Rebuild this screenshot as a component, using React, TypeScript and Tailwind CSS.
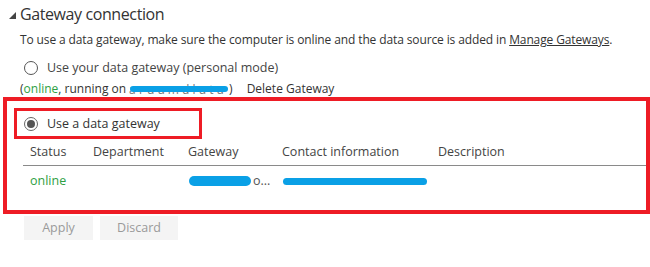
import React from "react";

const font = { fontFamily: '"Open Sans", "Noto Sans", sans-serif' };

function Blur({ w, h = 7, className = "" }: { w: number; h?: number; className?: string }) {
  return (
    <svg width={w} height={h + 2} viewBox={`0 0 ${w} ${h + 2}`} className={className}>
      <path d={`M${h / 2 + 1} ${h / 2 + 1} L${w - h / 2 - 1} ${h / 2 + 1}`} stroke="#0aa0e6" strokeWidth={h} strokeLinecap="round" />
    </svg>
  );
}

export default function App() {
  return (
    <div className="w-[650px] h-[267px] bg-white overflow-hidden text-[#333]" style={font}>
      {/* Title */}
      <div className="flex items-center h-[22px] mt-[3px] pl-[9px]">
        <svg width="7" height="7" viewBox="0 0 7 7" className="mr-[4px] mt-[2px]">
          <polygon points="7,0 7,7 0,7" fill="#444" />
        </svg>
        <span className="text-[16px] leading-none tracking-[-0.4px] text-[#333]">Gateway connection</span>
      </div>
      {/* Description */}
      <div className="ml-[20px] mt-[7px] h-[16px] text-[12px] leading-[16px] tracking-[-0.12px] text-[#333] whitespace-nowrap">
        To use a data gateway, make sure the computer is online and the data source is added in{" "}
        <span className="underline">Manage Gateways</span>.
      </div>
      {/* Radio 1 */}
      <div className="flex items-center ml-[24px] mt-[12px] h-[16px]">
        <span className="w-[14px] h-[14px] rounded-full border-[1.5px] border-[#555] box-border" />
        <span className="ml-[9px] text-[12.5px] tracking-[0px] leading-[16px] text-[#444] whitespace-nowrap">
          Use your data gateway (personal mode)
        </span>
      </div>
      {/* status line */}
      <div className="flex items-center ml-[20px] mt-[6px] h-[14px] text-[12px] tracking-[0px] leading-[16px] text-[#333] whitespace-nowrap">
        <span>(</span>
        <span className="text-[#2ea043]">online</span>
        <span>, running on</span>
        <span className="relative w-[100px] h-[12px] ml-[3px]">
          <span className="absolute left-0 top-[-1px] text-[#777]">a r u u m d l u t u</span>
          <Blur w={100} h={6} className="absolute left-0 top-[2px]" />
        </span>
        <span>)</span>
        <span className="ml-[14px]">Delete Gateway</span>
      </div>
      {/* Red outlined section */}
      <div className="ml-[3px] mt-[1px] w-[647px] h-[117px] border-4 border-[#ee1c25] box-border">
        <div className="ml-[7px] mt-[7px] w-[188px] h-[31px] border-[3px] border-[#ee1c25] box-border flex items-center pl-[7px]">
          <span className="w-[14px] h-[14px] rounded-full border-[1.5px] border-[#666] box-border flex items-center justify-center">
            <span className="w-[8px] h-[8px] rounded-full bg-[#555]" />
          </span>
          <span className="ml-[9px] text-[12.5px] tracking-[0px] leading-[16px] text-[#333] whitespace-nowrap">Use a data gateway</span>
        </div>
        {/* Table */}
        <div className="ml-[16px] mt-[5px] w-[623px]">
          <div className="flex h-[22px] items-center pb-[4px] border-b-[1.5px] border-[#8a8a8a] text-[12.5px] tracking-[0px] text-[#444] pl-[7px] whitespace-nowrap">
            <span className="w-[63px]">Status</span>
            <span className="w-[95px]">Department</span>
            <span className="w-[94px]">Gateway</span>
            <span className="w-[156px]">Contact information</span>
            <span>Description</span>
          </div>
          <div className="flex h-[30px] items-center text-[12.5px] tracking-[0px] text-[#444] pl-[7px] whitespace-nowrap">
            <span className="w-[63px] text-[#2ea043]">online</span>
            <span className="w-[95px]" />
            <span className="w-[94px] flex items-center">
              <Blur w={64} h={10} />
              <span className="text-[#555] ml-[1px]">o...</span>
            </span>
            <span className="w-[156px] flex items-center">
              <Blur w={146} h={7} />
            </span>
          </div>
        </div>
      </div>
      {/* Buttons */}
      <div className="flex ml-[24px] mt-[2px] gap-[7px]">
        <div className="w-[69px] h-[24px] bg-[#f4f4f4] text-[#9a9a9a] text-[12.5px] flex items-center justify-center">Apply</div>
        <div className="w-[78px] h-[24px] bg-[#f4f4f4] text-[#9a9a9a] text-[12.5px] flex items-center justify-center">Discard</div>
      </div>
    </div>
  );
}
